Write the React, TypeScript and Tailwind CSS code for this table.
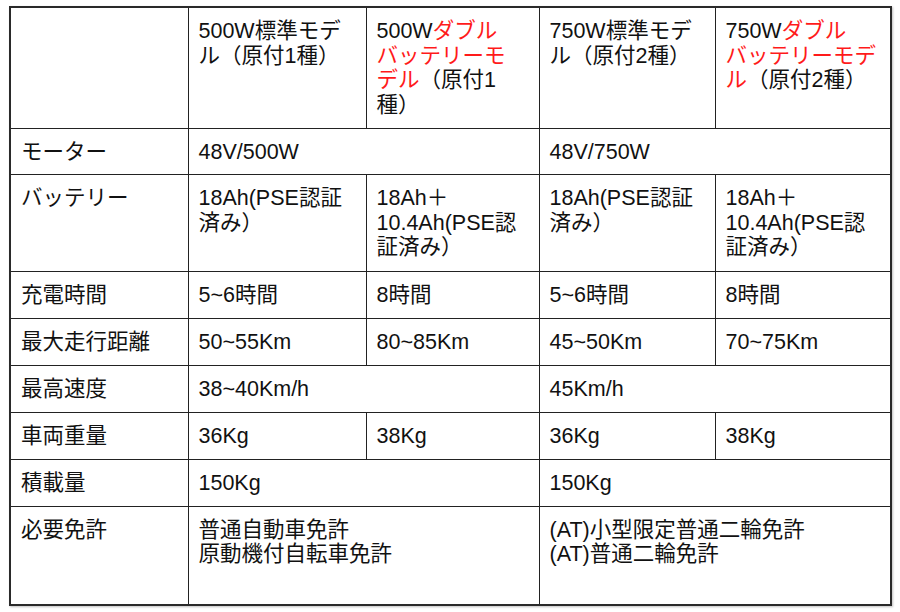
import React from 'react';

const cell = 'border border-[#222] align-top px-[10px] pt-[11px] pb-[10px] whitespace-nowrap';
const red = 'text-[#ff1a1a]';

const App: React.FC = () => {
  return (
    <div className="w-[900px] h-[612px] bg-white pl-[9px] pt-[6px] font-['Liberation_Sans','Noto_Sans_CJK_JP',sans-serif] text-[21.5px] leading-[24.5px] text-[#111]">
      <table className="table-fixed border-collapse border-2 border-[#2a2a2a] w-[881px] shadow-[1px_1px_2px_rgba(0,0,0,0.25)]">
        <colgroup>
          <col className="w-[178px]" />
          <col className="w-[178px]" />
          <col className="w-[173px]" />
          <col className="w-[176px]" />
          <col className="w-[176px]" />
        </colgroup>
        <tbody>
          <tr className="h-[121px]">
            <td className={cell}></td>
            <td className={cell}>
              500W標準モデ<br />ル（原付1種）
            </td>
            <td className={cell}>
              500W<span className={red}>ダブル</span>
              <br />
              <span className={red}>バッテリーモ</span>
              <br />
              <span className={red}>デル</span>（原付1
              <br />種）
            </td>
            <td className={cell}>
              750W標準モデ<br />ル（原付2種）
            </td>
            <td className={cell}>
              750W<span className={red}>ダブル</span>
              <br />
              <span className={red}>バッテリーモデ</span>
              <br />
              <span className={red}>ル</span>（原付2種）
            </td>
          </tr>
          <tr className="h-[46px]">
            <td className={cell}>モーター</td>
            <td className={cell} colSpan={2}>48V/500W</td>
            <td className={cell} colSpan={2}>48V/750W</td>
          </tr>
          <tr className="h-[97px]">
            <td className={cell}>バッテリー</td>
            <td className={cell}>18Ah(PSE認証<br />済み）</td>
            <td className={cell}>18Ah＋<br />10.4Ah(PSE認<br />証済み）</td>
            <td className={cell}>18Ah(PSE認証<br />済み）</td>
            <td className={cell}>18Ah＋<br />10.4Ah(PSE認<br />証済み）</td>
          </tr>
          <tr className="h-[47px]">
            <td className={cell}>充電時間</td>
            <td className={cell}>5~6時間</td>
            <td className={cell}>8時間</td>
            <td className={cell}>5~6時間</td>
            <td className={cell}>8時間</td>
          </tr>
          <tr className="h-[46px]">
            <td className={cell}>最大走行距離</td>
            <td className={cell}>50~55Km</td>
            <td className={cell}>80~85Km</td>
            <td className={cell}>45~50Km</td>
            <td className={cell}>70~75Km</td>
          </tr>
          <tr className="h-[47px]">
            <td className={cell}>最高速度</td>
            <td className={cell} colSpan={2}>38~40Km/h</td>
            <td className={cell} colSpan={2}>45Km/h</td>
          </tr>
          <tr className="h-[47px]">
            <td className={cell}>車両重量</td>
            <td className={cell}>36Kg</td>
            <td className={cell}>38Kg</td>
            <td className={cell}>36Kg</td>
            <td className={cell}>38Kg</td>
          </tr>
          <tr className="h-[47px]">
            <td className={cell}>積載量</td>
            <td className={cell} colSpan={2}>150Kg</td>
            <td className={cell} colSpan={2}>150Kg</td>
          </tr>
          <tr className="h-[99px]">
            <td className={cell}>必要免許</td>
            <td className={cell} colSpan={2}>普通自動車免許<br />原動機付自転車免許</td>
            <td className={cell} colSpan={2}>(AT)小型限定普通二輪免許<br />(AT)普通二輪免許</td>
          </tr>
        </tbody>
      </table>
    </div>
  );
};

export default App;
